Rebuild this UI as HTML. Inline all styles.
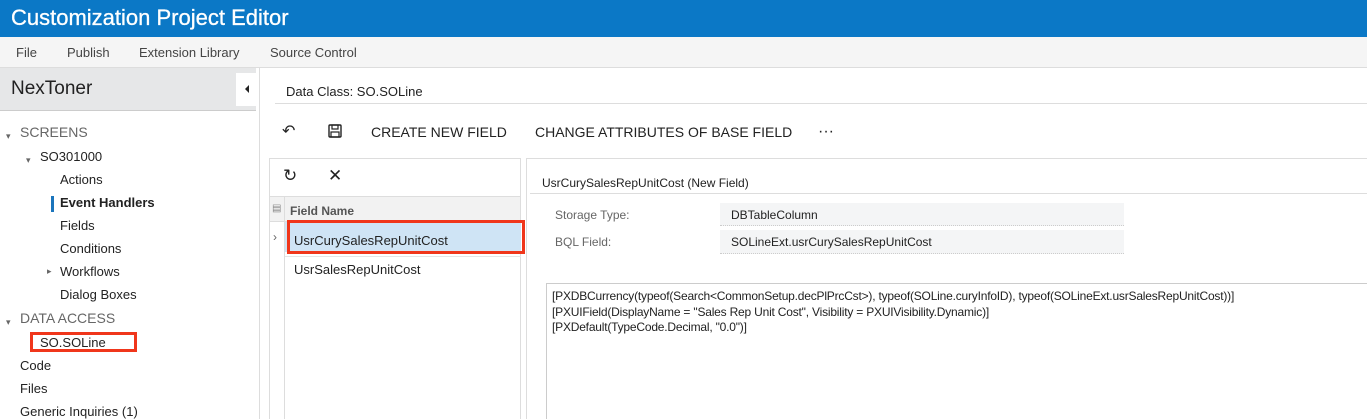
<!DOCTYPE html><html><head><style>
*{margin:0;padding:0;box-sizing:border-box}
html,body{width:1367px;height:419px;overflow:hidden}
body{font-family:"Liberation Sans",sans-serif;background:#fff;position:relative;color:#222}
.a{position:absolute;white-space:nowrap}
.s{font-size:13px}
</style></head><body>
<div class="a" style="left:0;top:0;width:1367px;height:37px;background:#0b78c6"></div>
<div class="a" style="left:11px;top:5px;font-size:22px;color:#fff;-webkit-text-stroke:0.3px #fff">Customization Project Editor</div>
<div class="a" style="left:0;top:37px;width:1367px;height:31px;background:#f5f5f5;border-bottom:1px solid #ddd"></div>
<div class="a s" style="left:16px;top:45px;color:#444">File</div>
<div class="a s" style="left:67px;top:45px;color:#444">Publish</div>
<div class="a s" style="left:139px;top:45px;color:#444">Extension Library</div>
<div class="a s" style="left:270px;top:45px;color:#444">Source Control</div>
<div class="a" style="left:0;top:68px;width:256px;height:43px;background:#e6e7e8;border-bottom:1px solid #ccc"></div>
<div class="a" style="left:11px;top:78px;font-size:19px;color:#222">NexToner</div>
<div class="a" style="left:236px;top:73px;width:22px;height:33px;background:#fff"></div>
<div class="a" style="left:245px;top:85px;width:0;height:0;border-right:4px solid #222;border-top:4px solid transparent;border-bottom:4px solid transparent"></div>
<div class="a" style="left:259px;top:68px;width:1px;height:351px;background:#ddd"></div>
<div class="a" style="left:6px;top:131px;font-size:9px;color:#666">▾</div>
<div class="a" style="left:20px;top:124px;font-size:14px;color:#666">SCREENS</div>
<div class="a" style="left:26px;top:155px;font-size:9px;color:#666">▾</div>
<div class="a s" style="left:40px;top:149px">SO301000</div>
<div class="a s" style="left:60px;top:172px">Actions</div>
<div class="a" style="left:51px;top:196px;width:3px;height:16px;background:#1b75bc"></div>
<div class="a s" style="left:60px;top:195px;font-weight:bold">Event Handlers</div>
<div class="a s" style="left:60px;top:218px">Fields</div>
<div class="a s" style="left:60px;top:241px">Conditions</div>
<div class="a" style="left:47px;top:266px;font-size:9px;color:#666">▸</div>
<div class="a s" style="left:60px;top:264px">Workflows</div>
<div class="a s" style="left:60px;top:287px">Dialog Boxes</div>
<div class="a" style="left:6px;top:317px;font-size:9px;color:#666">▾</div>
<div class="a" style="left:20px;top:310px;font-size:14px;color:#666">DATA ACCESS</div>
<div class="a" style="left:30px;top:332px;width:107px;height:20px;border:3px solid #f0361b"></div>
<div class="a s" style="left:40px;top:335px">SO.SOLine</div>
<div class="a s" style="left:20px;top:358px">Code</div>
<div class="a s" style="left:20px;top:381px">Files</div>
<div class="a s" style="left:20px;top:404px">Generic Inquiries (1)</div>
<div class="a s" style="left:286px;top:84px">Data Class: SO.SOLine</div>
<div class="a" style="left:275px;top:103px;width:1092px;height:1px;background:#ddd"></div>
<div class="a" style="left:282px;top:121px;font-size:16px">↶</div>
<svg class="a" style="left:328px;top:124px" width="14" height="14" viewBox="0 0 14 14"><rect x="1" y="1" width="12" height="12" rx="1" fill="none" stroke="#222" stroke-width="1.4"/><rect x="4" y="1" width="6" height="4" fill="none" stroke="#222" stroke-width="1.2"/><rect x="3" y="8" width="8" height="5" fill="none" stroke="#222" stroke-width="1.2"/></svg>
<div class="a" style="left:371px;top:124px;font-size:14px">CREATE NEW FIELD</div>
<div class="a" style="left:535px;top:124px;font-size:14px">CHANGE ATTRIBUTES OF BASE FIELD</div>
<div class="a" style="left:818px;top:123px;font-size:16px">···</div>
<div class="a" style="left:269px;top:158px;width:252px;height:261px;border:1px solid #ddd;border-bottom:none"></div>
<div class="a" style="left:283px;top:166px;font-size:17px">↻</div>
<div class="a" style="left:328px;top:166px;font-size:17px">✕</div>
<div class="a" style="left:270px;top:196px;width:250px;height:1px;background:#ddd"></div>
<div class="a" style="left:270px;top:197px;width:250px;height:25px;background:#f2f2f2;border-bottom:1px solid #ddd"></div>
<div class="a" style="left:284px;top:197px;width:1px;height:222px;background:#ddd"></div>
<div class="a" style="left:272px;top:203px;font-size:10px;color:#888">▤</div>
<div class="a" style="left:290px;top:204px;font-size:12px;font-weight:bold;color:#555">Field Name</div>
<div class="a" style="left:285px;top:222px;width:236px;height:30px;background:#cfe4f5"></div>
<div class="a" style="left:273px;top:230px;font-size:12px;color:#666">›</div>
<div class="a" style="left:287px;top:220px;width:238px;height:34px;border:3px solid #f0361b"></div>
<div class="a s" style="left:294px;top:233px">UsrCurySalesRepUnitCost</div>
<div class="a" style="left:285px;top:256px;width:236px;height:1px;background:#e5e5e5"></div>
<div class="a s" style="left:294px;top:262px">UsrSalesRepUnitCost</div>
<div class="a" style="left:526px;top:158px;width:841px;height:261px;border-left:1px solid #ddd;border-top:1px solid #ddd"></div>
<div class="a" style="left:542px;top:176px;font-size:12px">UsrCurySalesRepUnitCost (New Field)</div>
<div class="a" style="left:530px;top:193px;width:837px;height:1px;background:#ddd"></div>
<div class="a" style="left:555px;top:208px;font-size:12px;color:#666">Storage Type:</div>
<div class="a" style="left:720px;top:203px;width:404px;height:23px;background:#f4f5f6;border-bottom:1px dotted #ccc"></div>
<div class="a" style="left:731px;top:208px;font-size:12px">DBTableColumn</div>
<div class="a" style="left:555px;top:235px;font-size:12px;color:#666">BQL Field:</div>
<div class="a" style="left:720px;top:230px;width:404px;height:24px;background:#f4f5f6;border-bottom:1px dotted #ccc"></div>
<div class="a" style="left:731px;top:235px;font-size:12px">SOLineExt.usrCurySalesRepUnitCost</div>
<div class="a" style="left:546px;top:283px;width:821px;height:136px;border:1px solid #ccc;border-bottom:none;border-right:none"></div>
<div class="a" style="left:552px;top:289px;font-size:12px;line-height:15.5px;letter-spacing:-0.2px">[PXDBCurrency(typeof(Search&lt;CommonSetup.decPlPrcCst&gt;), typeof(SOLine.curyInfoID), typeof(SOLineExt.usrSalesRepUnitCost))]<br>[PXUIField(DisplayName = "Sales Rep Unit Cost", Visibility = PXUIVisibility.Dynamic)]<br>[PXDefault(TypeCode.Decimal, "0.0")]</div>
</body></html>
